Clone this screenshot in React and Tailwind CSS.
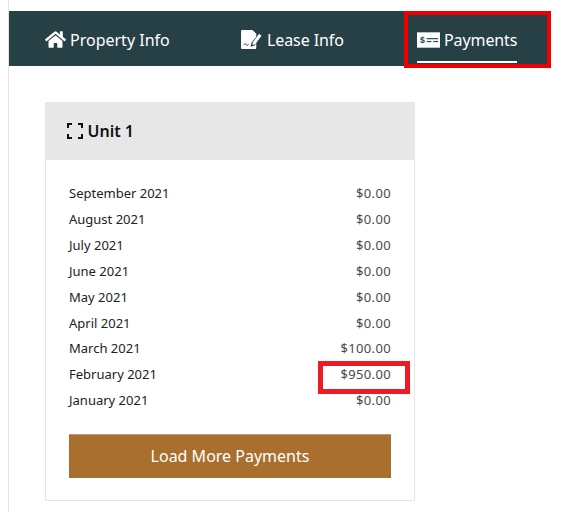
import React from "react";

const rows = [
  ["September 2021", "$0.00"],
  ["August 2021", "$0.00"],
  ["July 2021", "$0.00"],
  ["June 2021", "$0.00"],
  ["May 2021", "$0.00"],
  ["April 2021", "$0.00"],
  ["March 2021", "$100.00"],
  ["February 2021", "$950.00"],
  ["January 2021", "$0.00"],
];

const Home = () => (
  <svg viewBox="0 0 576 512" className="w-[21px] h-[19px] fill-white shrink-0">
    <path d="M280.4 148.3 96 300.1V464a16 16 0 0 0 16 16l112-.3a16 16 0 0 0 15.9-16V368a16 16 0 0 1 16-16h64a16 16 0 0 1 16 16v95.6a16 16 0 0 0 16 16l112 .4a16 16 0 0 0 16-16V300L295.700 148.300a12.200 12.200 0 0 0-15.300 0zM571.600 251.500 488 182.600V44a12 12 0 0 0-12-12h-56a12 12 0 0 0-12 12v72.600L318.500 43a48 48 0 0 0-61 0L4.300 251.500a12 12 0 0 0-1.600 16.900l25.500 31A12 12 0 0 0 45.200 301l235.200-193.700a12.200 12.200 0 0 1 15.300 0L530.900 301a12 12 0 0 0 16.900-1.600l25.500-31a12 12 0 0 0-1.700-16.900z" />
  </svg>
);

const Lease = () => (
  <svg viewBox="0 0 22 20" className="w-[21px] h-[19px] shrink-0">
    <path d="M1 0h11l4 4v3l-5 6.500-1 4 4-1 2-2.500V19a1 1 0 0 1-1 1H1a1 1 0 0 1-1-1V1a1 1 0 0 1 1-1z" fill="#fff" />
    <path d="M3 16c1-2 2-2 2.500-.5S7 16 8 15" stroke="#274046" strokeWidth="1" fill="none" />
    <path d="M12.500 13 19 4l2.500 2-6.500 9-3 1z" fill="#fff" />
  </svg>
);

const Check = () => (
  <svg viewBox="0 0 24 16" className="w-[23px] h-[16px] shrink-0">
    <rect width="24" height="16" fill="#fff" />
    <text x="3" y="11.500" fontSize="9" fontWeight="700" fill="#274046" fontFamily="'Liberation Sans', sans-serif">$</text>
    <rect x="10" y="6" width="12" height="1.200" fill="#274046" />
    <rect x="10" y="9" width="5" height="1.200" fill="#274046" />
    <rect x="17" y="9" width="5" height="1.200" fill="#274046" />
  </svg>
);

const Corners = () => (
  <svg viewBox="0 0 16 16" className="w-4 h-4 shrink-0" fill="none" stroke="#111" strokeWidth="2">
    <path d="M1 5V1h4M11 1h4v4M15 11v4h-4M5 15H1v-4" />
  </svg>
);

export default function App() {
  return (
    <div className="relative w-[566px] h-[512px] bg-white overflow-hidden font-['Noto_Sans','Open_Sans',sans-serif]">
      <div className="ml-2 w-[540px] h-[512px] pt-[11px] border-l border-[#e5e5e5]">
        <nav className="flex items-center h-[55px] bg-[#274046] text-white text-[16px]">
          <a className="flex items-center gap-[4px] ml-9 w-[196px] pt-[2px]"><Home />Property Info</a>
          <a className="flex items-center gap-[5px] w-[176px] pt-[2px] tracking-[-0.1px]"><Lease />Lease Info</a>
          <a className="relative flex items-center gap-[4px] h-full pt-[2px] tracking-[-0.1px]">
            <Check />Payments
            <span className="absolute left-0 right-0 bottom-[3px] h-[2px] bg-white" />
          </a>
        </nav>
        <section className="ml-9 mt-9 w-[370px] h-[399px] border border-[#e5e5e5]">
          <header className="flex items-center gap-[4.5px] h-[58px] pl-[22px] bg-[#e7e7e7] text-[16px] font-semibold text-[#111] -mx-px -mt-px">
            <Corners />Unit 1
          </header>
          <ul className="mt-[21px] px-[23px] text-[13px] text-[#222]">
            {rows.map(([m, v]) => (
              <li key={m} className="flex justify-between h-[25.875px] items-center">
                <span>{m}</span>
                <span className="text-[#4a4a4a] tracking-[0.35px]">{v}</span>
              </li>
            ))}
          </ul>
          <button className="block mx-[23px] mt-[20px] w-[322px] h-[44px] bg-[#a96f2e] border-t border-t-[#c09a6c] text-white text-[16px]">
            Load More Payments
          </button>
        </section>
      </div>
      <div className="absolute left-[404px] top-[11px] w-[147px] h-[57px] border-[4px] border-[#ee0000]" />
      <div className="absolute left-[318px] top-[361px] w-[92px] h-[33px] border-[5px] border-[#ed1c24]" />
    </div>
  );
}
